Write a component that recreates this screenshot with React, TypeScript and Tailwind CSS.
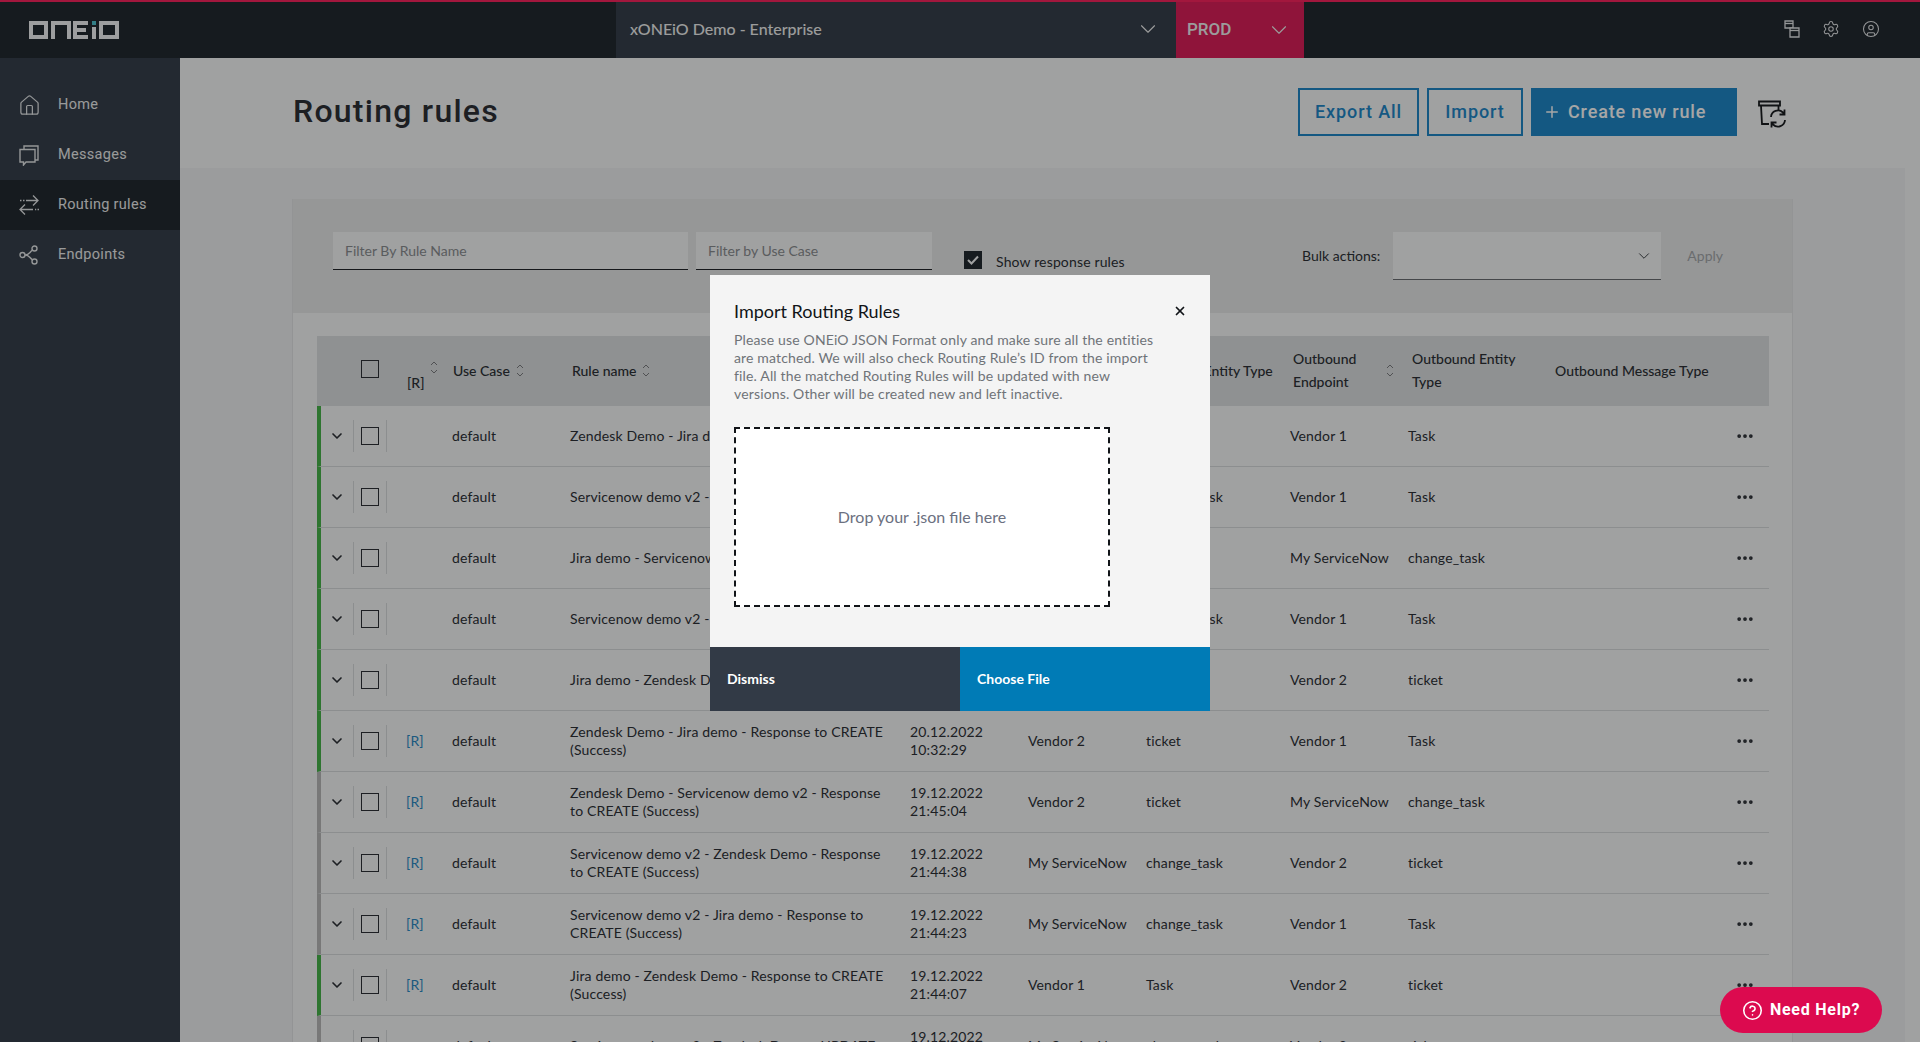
import { ChevronDown, CircleHelp, CircleUser, Ellipsis, House, Plus, Settings, X } from "lucide-react"

const din = "font-['Roboto',sans-serif]"

type Rule = {
  active: boolean
  response: boolean
  name: string
  date: string
  time: string
  inEndpoint: string
  inType: string
  outEndpoint: string
  outType: string
}

const rules: Rule[] = [
  { active: true, response: false, name: "Zendesk Demo - Jira demo - CREATE", date: "20.12.2022", time: "10:32:01", inEndpoint: "Vendor 2", inType: "ticket", outEndpoint: "Vendor 1", outType: "Task" },
  { active: true, response: false, name: "Servicenow demo v2 - Jira demo - CREATE", date: "19.12.2022", time: "21:46:12", inEndpoint: "My ServiceNow", inType: "change_task", outEndpoint: "Vendor 1", outType: "Task" },
  { active: true, response: false, name: "Jira demo - Servicenow demo v2 - CREATE", date: "19.12.2022", time: "21:45:40", inEndpoint: "Vendor 1", inType: "Task", outEndpoint: "My ServiceNow", outType: "change_task" },
  { active: true, response: false, name: "Servicenow demo v2 - Jira demo - UPDATE", date: "19.12.2022", time: "21:45:21", inEndpoint: "My ServiceNow", inType: "change_task", outEndpoint: "Vendor 1", outType: "Task" },
  { active: true, response: false, name: "Jira demo - Zendesk Demo - CREATE", date: "19.12.2022", time: "21:45:10", inEndpoint: "Vendor 1", inType: "Task", outEndpoint: "Vendor 2", outType: "ticket" },
  { active: true, response: true, name: "Zendesk Demo - Jira demo - Response to CREATE (Success)", date: "20.12.2022", time: "10:32:29", inEndpoint: "Vendor 2", inType: "ticket", outEndpoint: "Vendor 1", outType: "Task" },
  { active: false, response: true, name: "Zendesk Demo - Servicenow demo v2 - Response to CREATE (Success)", date: "19.12.2022", time: "21:45:04", inEndpoint: "Vendor 2", inType: "ticket", outEndpoint: "My ServiceNow", outType: "change_task" },
  { active: false, response: true, name: "Servicenow demo v2 - Zendesk Demo - Response to CREATE (Success)", date: "19.12.2022", time: "21:44:38", inEndpoint: "My ServiceNow", inType: "change_task", outEndpoint: "Vendor 2", outType: "ticket" },
  { active: false, response: true, name: "Servicenow demo v2 - Jira demo - Response to CREATE (Success)", date: "19.12.2022", time: "21:44:23", inEndpoint: "My ServiceNow", inType: "change_task", outEndpoint: "Vendor 1", outType: "Task" },
  { active: true, response: true, name: "Jira demo - Zendesk Demo - Response to CREATE (Success)", date: "19.12.2022", time: "21:44:07", inEndpoint: "Vendor 1", inType: "Task", outEndpoint: "Vendor 2", outType: "ticket" },
  { active: false, response: false, name: "Servicenow demo v2 - Zendesk Demo - UPDATE", date: "19.12.2022", time: "21:43:50", inEndpoint: "My ServiceNow", inType: "change_task", outEndpoint: "Vendor 2", outType: "ticket" },
]

function Logo() {
  return (
    <svg width="90" height="18" viewBox="0 0 90 18" fill="none">
      <path d="M2 2h15v14H2z M24 18V2h16v16" stroke="#f2f3f4" strokeWidth="4" />
      <path d="M44 0h15v4H48v3h9v4h-9v3h11v4H44z" fill="#f2f3f4" />
      <rect x="63" y="0" width="4" height="4" fill="#4fc3d0" />
      <rect x="63" y="6" width="4" height="12" fill="#f2f3f4" />
      <path d="M72 2h16v14H72z" stroke="#f2f3f4" strokeWidth="4" />
    </svg>
  )
}

function MessagesIcon() {
  return (
    <svg width="20" height="21" viewBox="0 0 20 21" fill="none" stroke="#e4e6e8" strokeWidth="1.4" className="ml-[1px]">
      <path d="M5 4V1h14v14h-3" />
      <path d="M1 4.500h15V17H7l-2.500 3v-3H1z" />
    </svg>
  )
}

function RoutingIcon() {
  return (
    <svg width="20" height="22" viewBox="0 0 20 22" fill="none" stroke="#e4e6e8" strokeWidth="1.3" className="ml-[1px]">
      <path d="M7 6.500h12M14 1.500l5 5-5 5" />
      <path d="M1 6.500h1.500M4 6.500h1.500" />
      <path d="M14 15.500H1M6 10.500l-5 5 5 5" />
      <path d="M16 15.500h1.200M18.500 15.500H20" />
    </svg>
  )
}

function EndpointsIcon() {
  return (
    <svg width="20" height="20" viewBox="0 0 20 20" fill="none" stroke="#e4e6e8" strokeWidth="1.4" className="ml-[1px]">
      <circle cx="3.500" cy="10" r="2.500" />
      <circle cx="15.500" cy="3.500" r="2.500" />
      <circle cx="15.500" cy="16.500" r="2.500" />
      <path d="M6 10c4 0 4-2 7.500-5M6 10c4 0 4 2 7.500 5" />
    </svg>
  )
}

function WindowsIcon() {
  return (
    <svg width="16" height="18" viewBox="0 0 16 18" fill="none" stroke="#e4e6e8" strokeWidth="1.300">
      <path d="M1 1h8v7H1z" />
      <path d="M1 3.500h8" />
      <path d="M6 8h9v9H6z" fill="#222a30" />
      <path d="M6 10.500h9" />
    </svg>
  )
}

function RestoreIcon() {
  return (
    <svg width="28" height="29" viewBox="0 0 28 29" fill="none" stroke="#1a1d20" strokeWidth="1.800">
      <path d="M1 1.500h21v4H1z" />
      <path d="M3 5.500l1 18.500h7" />
      <path d="M20.500 5.500v5" />
      <path d="M13 17a7 7 0 0 1 12-4.500l1 1.500M26.500 9.500v5h-5" />
      <path d="M27 20a7 7 0 0 1-12 4.500l-1-1.500M13.500 27.500v-5h5" />
    </svg>
  )
}

function SortIcon() {
  return (
    <svg width="8" height="15" viewBox="0 0 8 15" fill="none" stroke="#6f7275" strokeWidth="0.9" className="shrink-0">
      <path d="M1 5l3-3 3 3M1 10l3 3 3-3" />
    </svg>
  )
}

function Checkbox() {
  return <span className="block h-[18px] w-[18px] border border-[#2d3136]" />
}

function NavItem({ icon, label, active }: { icon: React.ReactNode; label: string; active?: boolean }) {
  return (
    <div className={`flex h-[50px] items-center pl-[18px] ${active ? "bg-[#222a30]" : ""}`}>
      <span className="flex w-[40px] shrink-0 items-center">{icon}</span>
      <span className={`${din} text-[14.500px] tracking-[0.3px] text-[#eceded]`}>{label}</span>
    </div>
  )
}

function HeaderRow() {
  return (
    <div className="flex h-[70px] items-center bg-[#dcdfe0] pb-[2px] pl-[4px] text-sm leading-[23px] font-medium text-[#2d3136]">
      <div className="w-[32px] shrink-0" />
      <div className="w-[34px] shrink-0 pb-[2px] pl-[8px]">
        <Checkbox />
      </div>
      <div className="flex w-[65px] shrink-0 items-start pl-[20px]">
        <span className="mt-[24px]">[R]</span>
        <span className="mt-[13px] ml-[6px]"><SortIcon /></span>
      </div>
      <div className="flex w-[118px] shrink-0 items-center gap-[6px] pl-[1px]">Use Case <SortIcon /></div>
      <div className="flex w-[340px] shrink-0 items-center gap-[6px] pl-[2px]">Rule name <SortIcon /></div>
      <div className="w-[118px] shrink-0" />
      <div className="w-[118px] shrink-0" />
      <div className="w-[144px] shrink-0 whitespace-nowrap pl-[3px]">Inbound Entity Type</div>
      <div className="flex w-[118px] shrink-0 items-center pl-[3px]">
        <span className="w-[93px]">Outbound Endpoint</span>
        <SortIcon />
      </div>
      <div className="w-[147px] shrink-0 pl-[4px]"><span className="block w-[120px]">Outbound Entity Type</span></div>
      <div className="whitespace-nowrap">Outbound Message Type</div>
    </div>
  )
}

function RuleRow({ rule }: { rule: Rule }) {
  return (
    <div className={`flex h-[61px] shrink-0 items-center border-b border-l-4 border-b-[#d8dbdc] text-sm leading-[18px] tracking-[0.15px] text-[#2d3136] ${rule.active ? "border-l-[#47b44b]" : "border-l-[#b8b8b8]"}`}>
      <div className="flex w-[32px] shrink-0 justify-center">
        <ChevronDown size={16} strokeWidth={2.5} />
      </div>
      <div className="flex h-[32px] w-[34px] shrink-0 items-center justify-center border-x border-[#d8dbdc]">
        <Checkbox />
      </div>
      <div className="w-[65px] shrink-0 pl-[19px] text-[#2b8ac4]">{rule.response ? "[R]" : ""}</div>
      <div className="w-[118px] shrink-0">default</div>
      <div className="w-[340px] shrink-0 pr-[20px]">{rule.name}</div>
      <div className="w-[118px] shrink-0">
        {rule.date}
        <br />
        {rule.time}
      </div>
      <div className="w-[118px] shrink-0">{rule.inEndpoint}</div>
      <div className="w-[144px] shrink-0">{rule.inType}</div>
      <div className="w-[118px] shrink-0 whitespace-nowrap">{rule.outEndpoint}</div>
      <div className="w-[147px] shrink-0">{rule.outType}</div>
      <div className="flex flex-1 justify-end pr-[14px]">
        <Ellipsis size={20} strokeWidth={2.5} />
      </div>
    </div>
  )
}

function ImportModal() {
  return (
    <div className="w-[500px] bg-[#f4f4f4] font-['Lato',sans-serif]">
      <div className="h-[372px] px-[24px] pt-[23px]">
        <div className="flex items-start justify-between">
          <h2 className="text-lg leading-[26px] font-normal text-[#111418]">Import Routing Rules</h2>
          <X size={14} strokeWidth={3} className="mt-[6px] mr-[-1px] text-[#111418]" />
        </div>
        <p className="mt-[7px] w-[430px] text-sm leading-[18px] tracking-[0.15px] text-[#6f7378]">
          Please use ONEiO JSON Format only and make sure all the entities are matched. We will also check Routing Rule’s ID from the import file. All the matched Routing Rules will be updated with new versions. Other will be created new and left inactive.
        </p>
        <div className="mt-[24px] flex h-[180px] w-[376px] items-center justify-center border-2 border-dashed border-[#111418] bg-white text-base text-[#6b7080]">
          Drop your .json file here
        </div>
      </div>
      <div className="flex h-[64px] text-sm font-bold text-white">
        <div className="flex w-[250px] items-center bg-[#323a46] pl-[17px]">Dismiss</div>
        <div className="flex w-[250px] items-center bg-[#007bb6] pl-[17px]">Choose File</div>
      </div>
    </div>
  )
}

export default function App() {
  return (
    <div className="flex h-screen flex-col overflow-hidden bg-[#f6f7f8] font-['Lato',sans-serif]">
      {/* Top bar */}
      <header className="flex h-[58px] shrink-0 border-t-2 border-t-[#f9245e] bg-[#222a30]">
        <div className="flex w-[616px] shrink-0 items-center pl-[29px]">
          <Logo />
        </div>
        <div className="flex w-[560px] shrink-0 items-center justify-between bg-[#36404c] pr-[15px] pb-[2px] pl-[14px]">
          <span className="text-base font-medium text-[#f0f0f0]">xONEiO Demo - Enterprise</span>
          <ChevronDown size={26} strokeWidth={1} className="text-[#f0f0f0]" />
        </div>
        <div className="flex w-[128px] shrink-0 items-center justify-between bg-[#dc2059] pr-[12px] pl-[11px]">
          <span className={`${din} text-[17px] font-medium text-[#f0f0f0]`}>PROD</span>
          <ChevronDown size={26} strokeWidth={1} className="text-[#f0f0f0]" />
        </div>
        <div className="flex flex-1 items-center justify-end gap-[22px] pr-[40px] pb-[2px] text-[#e4e6e8]">
          <WindowsIcon />
          <Settings size={18} strokeWidth={1.4} />
          <CircleUser size={18} strokeWidth={1.4} />
        </div>
      </header>

      <div className="flex min-h-0 flex-1">
        {/* Sidebar */}
        <aside className="w-[180px] shrink-0 bg-[#36404c] pt-[22px]">
          <NavItem icon={<House size={23} strokeWidth={1.3} className="text-[#e4e6e8]" />} label="Home" />
          <NavItem icon={<MessagesIcon />} label="Messages" />
          <NavItem icon={<RoutingIcon />} label="Routing rules" active />
          <NavItem icon={<EndpointsIcon />} label="Endpoints" />
        </aside>

        <main className="flex min-w-0 flex-1 flex-col">
          <div className="flex h-[110px] shrink-0 items-start justify-between pt-[30px] pr-[134px] pl-[113px]">
            <h1 className={`${din} text-[32px] leading-[46px] font-medium tracking-[1.25px] text-[#2d3136]`}>Routing rules</h1>
            <div className="flex items-start">
              <button className={`${din} h-[48px] w-[121px] border-2 border-[#1f88c8] text-lg font-medium tracking-[0.9px] text-[#1f88c8]`}>Export All</button>
              <button className={`${din} ml-[8px] h-[48px] w-[96px] border-2 border-[#1f88c8] text-lg font-medium tracking-[0.9px] text-[#1f88c8]`}>Import</button>
              <button className={`${din} ml-[8px] flex h-[48px] w-[206px] items-center bg-[#1f88c8] pl-[12px] text-lg font-medium tracking-[0.85px] text-white`}>
                <Plus size={18} strokeWidth={2} className="mr-[7px]" />
                Create new rule
              </button>
              <span className="mt-[12px] ml-[21px]"><RestoreIcon /></span>
            </div>
          </div>

          <div className="mr-[15px] min-h-0 flex-1 bg-[#eef0f1] px-[112px] pt-[31px]">
            <div className="h-full border-x border-[#e2e4e5]">
              {/* Filters */}
              <div className="flex h-[114px] bg-[#e6e8e9] pt-[33px] pr-[69px] pl-[40px] text-sm text-[#2d3136]">
                <div className="flex h-[38px] w-[355px] items-center border-b border-[#22262a] bg-[#f6f7f8] pl-[12px] text-[#8b8e91]">Filter By Rule Name</div>
                <div className="ml-[8px] flex h-[38px] w-[236px] items-center border-b border-[#22262a] bg-[#f6f7f8] pl-[12px] text-[#8b8e91]">Filter by Use Case</div>
                <div className="mt-[19px] ml-[32px] flex h-[18px] w-[18px] items-center justify-center bg-[#222a30]">
                  <svg width="14" height="14" viewBox="0 0 14 14" fill="none" stroke="#f6f7f8" strokeWidth="2"><path d="M2 7l3.500 3.500L12 3.500" /></svg>
                </div>
                <span className="mt-[21px] ml-[14px] leading-[18px] tracking-[0.15px]">Show response rules</span>
                <div className="ml-auto flex h-[48px] items-center">
                  <span>Bulk actions:</span>
                  <div className="ml-[13px] flex h-[48px] w-[268px] items-center justify-end border-b border-[#6a6e72] bg-[#f6f7f8] pr-[8px]">
                    <ChevronDown size={18} strokeWidth={1.2} />
                  </div>
                  <span className="ml-[26px] text-[#a4a7a9]">Apply</span>
                </div>
              </div>

              {/* Table */}
              <div className="bg-[#f6f7f8] pt-[23px] pr-[23px] pl-[24px]">
                <HeaderRow />
                {rules.map((rule) => (
                  <RuleRow key={rule.name} rule={rule} />
                ))}
              </div>
            </div>
          </div>
        </main>
      </div>

      {/* Modal backdrop */}
      <div className="fixed inset-0 z-10 flex items-start justify-center bg-black/35 pt-[275px]">
        <ImportModal />
      </div>

      <button className="fixed right-[38px] bottom-[9px] z-20 flex h-[46px] w-[162px] items-center justify-center gap-[7px] rounded-full bg-[#dc0a4f] font-['Roboto',sans-serif] text-base font-bold tracking-[0.75px] text-white">
        <CircleHelp size={21} strokeWidth={1.8} />
        Need Help?
      </button>
    </div>
  )
}
